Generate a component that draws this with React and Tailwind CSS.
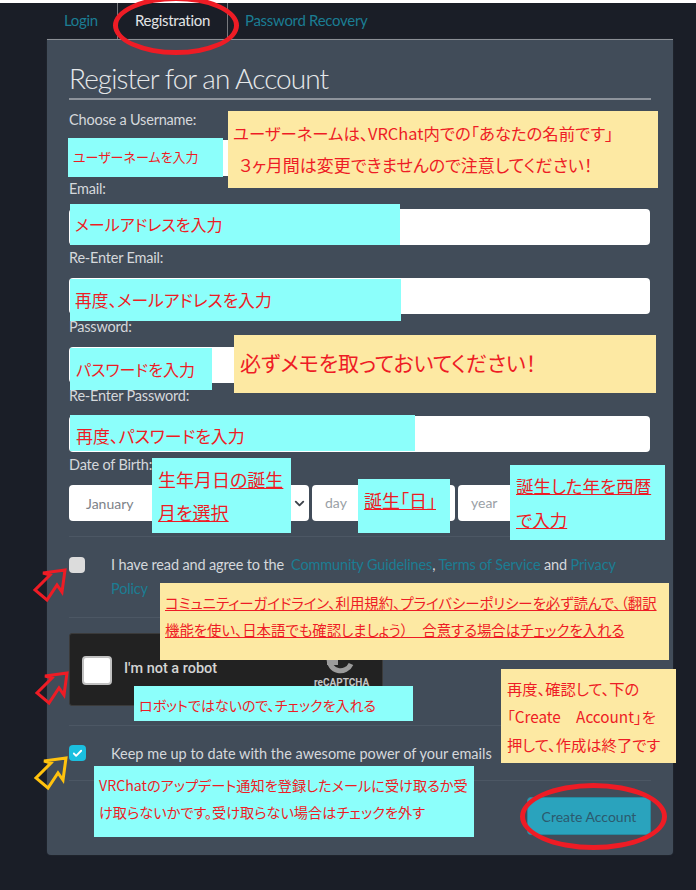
import React from "react";
import { ChevronDown, Check } from "lucide-react";

const jp = "[font-family:'Noto_Sans_CJK_JP',sans-serif] [font-feature-settings:'palt'] text-[#ee1c25]";
const ui = "[font-family:Lato,sans-serif]";

function Field({ label }) {
    return (
        <div className="flex flex-col mb-[3px] pr-px">
            <label className="h-5 mb-[10px] text-[14.5px] leading-5 text-[#d5d8dc] tracking-[-0.2px]">{label}</label>
            <input className="h-9 w-full rounded bg-white" />
        </div>
    );
}

function Note({ className, children }) {
    return <div className={`absolute whitespace-nowrap ${jp} ${className}`}>{children}</div>;
}

function Arrow({ className, color }) {
    return (
        <svg className={`absolute ${className}`} width="38" height="38" viewBox="0 0 38 38" fill="none">
            <polygon points="33,2 30,24 25,17 15,32 3,22 18,7 11,5" stroke={color} strokeWidth="3" />
        </svg>
    );
}

export default function App() {
    return (
        <div className={`relative w-[696px] h-[890px] overflow-hidden bg-[#1a1e27] ${ui}`}>
            <div className="h-[3px] bg-white" />

            {/* Tabs */}
            <div className="ml-[47px] w-[626px] h-9 flex items-stretch text-[15px] tracking-[-0.3px]">
                <a className="w-[70px] pl-[17px] leading-[34px] text-[#1b7d93]">Login</a>
                <a className="w-[111px] border-x border-[#77797d] text-center leading-[34px] text-[#e2e4e6]">Registration</a>
                <a className="pl-[17px] leading-[34px] text-[#1b7d93]">Password Recovery</a>
            </div>

            {/* Panel */}
            <div className="ml-[47px] w-[626px] h-[816px] px-[22px] bg-[#414c59] border-t border-[#8b8f95] rounded-b shadow-[0_0_2px_#2a313b]">
                <h1 className="h-[60px] pt-[20px] text-[28px] leading-9 text-[#e6e8ea] tracking-[-0.95px] font-light border-b-2 border-[#8d939b]">
                    Register for an Account
                </h1>
                <div className="mt-[10px]">
                    <Field label="Choose a Username:" />
                    <Field label="Email:" />
                    <Field label="Re-Enter Email:" />
                    <Field label="Password:" />
                    <Field label="Re-Enter Password:" />
                </div>

                <label className="block h-5 mb-[10px] text-[14.5px] leading-5 text-[#d5d8dc] tracking-[-0.2px]">Date of Birth:</label>
                <div className="flex gap-[3px] h-9 pr-px text-[14px] text-[#9a9fa6]">
                    <div className="w-[240px] flex items-center justify-between pl-[17px] pr-[2px] rounded bg-white">
                        <span className="text-[#7d8288]">January</span>
                        <ChevronDown size={15} strokeWidth={3} className="text-[#3d434b]" />
                    </div>
                    <div className="w-[143px] pl-[13px] leading-9 rounded bg-white">day</div>
                    <div className="flex-1 pl-[13px] leading-9 rounded bg-white">year</div>
                </div>

                <div className="mt-[15px] h-[82px] border-y border-[#4c5764] flex pt-[16px]">
                    <div className="w-[16px] h-[16px] shrink-0 mt-[4px] rounded bg-[#dcdcdc]" />
                    <p className="ml-[26px] text-[14.5px] leading-6 text-[#d5d8dc] tracking-[-0.15px]">
                        I have read and agree to the&nbsp; <a className="text-[#1b7d93]">Community Guidelines</a>, <a className="text-[#1b7d93]">Terms of Service</a> and <a className="text-[#1b7d93]">Privacy Policy</a>
                    </p>
                </div>

                <div className="mt-[15px] w-[314px] h-[73px] relative flex items-center rounded-[3px] bg-[#222222] border border-[#3a3a3a] [font-family:Roboto,sans-serif]">
                    <div className="ml-[12px] mt-[1px] w-[30px] h-[29px] rounded-sm bg-white border-2 border-[#c1c1c1]" />
                    <span className="ml-[12px] -mt-[1px] text-[14.5px] font-medium text-[#d4d4d4]">I'm not a robot</span>
                    <svg className="absolute left-[252px] top-[22px]" width="34" height="24" viewBox="0 0 34 24" fill="none">
                        <path d="M7 3a11.5 11.5 0 0 0 22 5" stroke="#9b9b9b" strokeWidth="5" />
                        <path d="M5 3h11v6h-11z" fill="#9b9b9b" />
                    </svg>
                    <span className="absolute left-[244px] top-[41px] text-[10px] font-bold text-[#c4c4c4]">reCAPTCHA</span>
                </div>

                <div className="mt-[19px] h-[56px] border-y border-[#4c5764] flex items-start pt-[19px]">
                    <div className="w-[17px] h-[16px] rounded flex items-center justify-center bg-[#1bbfdf]">
                        <Check size={11} strokeWidth={4} className="text-white" />
                    </div>
                    <span className="ml-[25px] text-[14.5px] leading-5 text-[#d5d8dc] -mt-[1px]">Keep me up to date with the awesome power of your emails</span>
                </div>

                <div className="mt-[16px] flex justify-end">
                    <button className="w-[124px] h-[38px] rounded bg-[#2aa3bd] border border-[#26899f] text-[14px] text-[#2c5a6e]">Create Account</button>
                </div>
            </div>

            {/* Notes laid over the form */}
            <Note className="left-[228px] top-[111px] w-[430px] h-[77px] bg-[#fde9a3] pl-[5px] pt-[6px] text-[17px] leading-8">
                <div className="text-[16.4px]">ユーザーネームは、VRChat内での「あなたの名前です」</div>
                <div className="pl-[6px]">３ヶ月間は変更できませんので注意してください！</div>
            </Note>
            <Note className="left-[68px] top-[138px] w-[155px] h-[39px] bg-[#8cfffb] pl-[5px] text-[13px] leading-[38px]">ユーザーネームを入力</Note>
            <Note className="left-[70px] top-[204px] w-[330px] h-[41px] bg-[#8cfffb] pl-[5px] text-[16px] leading-[40px]">メールアドレスを入力</Note>
            <Note className="left-[70px] top-[279px] w-[331px] h-[42px] bg-[#8cfffb] pl-[5px] text-[16.8px] leading-[42px]">再度、メールアドレスを入力</Note>
            <Note className="left-[70px] top-[348px] w-[142px] h-[42px] bg-[#8cfffb] pl-[6px] text-[16px] leading-[42px]">パスワードを入力</Note>
            <Note className="left-[234px] top-[335px] w-[422px] h-[58px] bg-[#fde9a3] pl-[6px] text-[21px] leading-[54px]">必ずメモを取っておいてください！</Note>
            <Note className="left-[70px] top-[415px] w-[345px] h-[36px] bg-[#8cfffb] pl-[6px] text-[17px] leading-[42px]">再度、パスワードを入力</Note>

            <Note className="left-[152px] top-[458px] w-[139px] h-[75px] bg-[#8cfffb] pl-[6px] pt-[5px] text-[18px] leading-[33px]">
                <div>生年月日<span className="underline">の誕生</span></div>
                <div className="underline">月を選択</div>
            </Note>
            <Note className="left-[358px] top-[479px] w-[92px] h-[54px] bg-[#8cfffb] pl-[6px] text-[18px] leading-[42px] underline">誕生「日」</Note>
            <Note className="left-[510px] top-[465px] w-[155px] h-[75px] bg-[#8cfffb] pl-[6px] pt-[4px] text-[17.5px] leading-[34px] underline">
                <div>誕生した年を西暦</div>
                <div>で入力</div>
            </Note>

            <Note className="left-[160px] top-[583px] w-[509px] h-[77px] bg-[#fde9a3] pl-[5px] pt-[6px] text-[14.4px] leading-[27px] underline">
                <div>コミュニティーガイドライン、利用規約、プライバシーポリシーを必ず読んで、（翻訳</div>
                <div>機能を使い、日本語でも確認しましょう）　合意する場合はチェックを入れる</div>
            </Note>
            <Note className="left-[134px] top-[686px] w-[279px] h-[35px] bg-[#8cfffb] pl-[5px] text-[14px] leading-[38px]">ロボットではないので、チェックを入れる</Note>
            <Note className="left-[501px] top-[669px] w-[175px] h-[94px] bg-[#fde9a3] pl-[6px] pt-[5px] text-[15.3px] leading-[28px]">
                <div>再度、確認して、下の</div>
                <div>「Create　Account」を</div>
                <div>押して、作成は終了です</div>
            </Note>
            <Note className="left-[94px] top-[766px] w-[380px] h-[71px] bg-[#8cfffb] pl-[5px] pt-[6px] text-[14.2px] leading-[27px]">
                <div>VRChatのアップデート通知を登録したメールに受け取るか受</div>
                <div>け取らないかです。受け取らない場合はチェックを外す</div>
            </Note>

            <Arrow className="left-[32px] top-[568px]" color="#ee1c25" />
            <Arrow className="left-[34px] top-[671px]" color="#ee1c25" />
            <Arrow className="left-[33px] top-[756px]" color="#ffc20e" />

            {/* Red rings */}
            <div className="absolute left-[113px] -top-[4px] w-[126px] h-[59px] rounded-[50%] border-[5px] border-[#ee1c25]" />
            <div className="absolute left-[520px] top-[783px] w-[147px] h-[67px] rounded-[50%] border-[5px] border-[#ee1c25]" />
        </div>
    );
}
